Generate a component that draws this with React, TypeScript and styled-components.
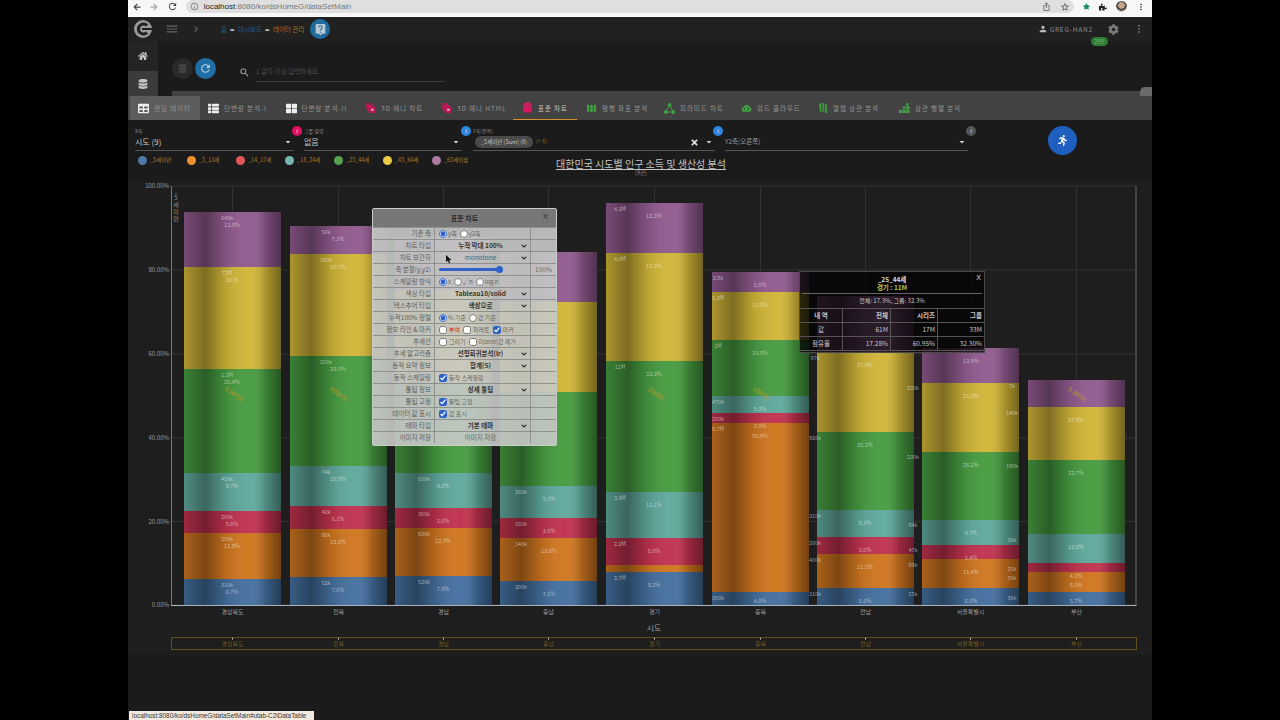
import React from 'react';
import styled, { createGlobalStyle } from 'styled-components';
import {
  FaArrowLeft, FaArrowRight, FaChevronDown, FaCloud, FaCog, FaDatabase, FaGhost, FaHome, FaPuzzlePiece,
  FaRunning, FaStar, FaTable, FaThLarge, FaThList, FaTimes,
} from 'react-icons/fa';
import { MdChevronRight, MdInfoOutline, MdIosShare, MdLiveHelp, MdMenu, MdMoreVert, MdPerson, MdRefresh, MdStarBorder, MdViewWeek, MdArrowDropDown, MdSearch } from 'react-icons/md';

const FONT = `"Noto Sans CJK KR", "Noto Sans", sans-serif`;

const GlobalStyle = createGlobalStyle`
  html, body { margin: 0; padding: 0; background: #000; height: 720px; overflow: hidden; }
  body { font-family: ${FONT}; }
`;

const Page = styled.div`
  position: relative;
  width: 1024px;
  height: 720px;
  margin: 0 auto;
  background: #1b1b1b;
  overflow: hidden;
`;

/* browser chrome */
const BrowserBar = styled.div`
  height: 17px;
  box-sizing: border-box;
  padding: 0 6px 3px 5px;
  background: #f7f7f7;
  border-bottom: 1px solid #fff;
  display: flex;
  align-items: center;
  color: #444;
`;
const NavIcons = styled.div`
  display: flex;
  align-items: center;
  gap: 9px;
  width: 53px;
  font-size: 8px;
`;
const UrlPill = styled.div`
  width: 894px;
  height: 13px;
  border-radius: 7px;
  background: #dfdfdf;
  display: flex;
  align-items: center;
  padding: 0 4px;
  box-sizing: border-box;
  gap: 5px;
  font: 8px "Liberation Sans", sans-serif;
  color: #777;
  b { font-weight: 400; color: #222; }
`;
const UrlEnd = styled.span`
  margin-left: auto;
  display: flex;
  gap: 9px;
  align-items: center;
  font-size: 9px;
  color: #555;
`;
const ExtIcons = styled.div`
  margin-left: 9px;
  display: flex;
  align-items: center;
  gap: 9px;
  font-size: 8px;
  color: #222;
`;
const Avatar = styled.span`
  width: 11px;
  height: 11px;
  border-radius: 50%;
  background: radial-gradient(circle at 50% 40%, #c9a78e 0 35%, #55524c 40% 60%, #cfcfcf 65%);
`;

/* app header */
const AppHeader = styled.header`
  height: 24px;
  background: #212121;
  display: flex;
  align-items: center;
  padding-left: 5px;
  color: #8a8a8a;
`;
const Logo = styled.svg`
  width: 20px;
  height: 20px;
  flex: none;
`;
const HeaderBtn = styled.span`
  display: flex;
  margin-left: ${p => p.$ml}px;
  font-size: ${p => p.$size || 14}px;
  color: ${p => p.$color || '#666'};
`;
const Crumbs = styled.nav`
  margin-left: 19px;
  display: flex;
  align-items: center;
  gap: 3px;
  font-size: 6.5px;
  color: #1f5f85;
`;
const CrumbArrow = styled.span`
  color: #bbb;
  font-size: 6px;
`;
const CrumbLast = styled.span`
  color: #a96f17;
`;
const HelpBtn = styled.span`
  width: 20px;
  height: 20px;
  border-radius: 50%;
  margin-left: 6px;
  background: #1f6a9e;
  color: #b9c7d1;
  display: flex;
  align-items: center;
  justify-content: center;
  font-size: 13px;
`;
const UserArea = styled.div`
  margin-left: auto;
  display: flex;
  align-items: center;
  position: relative;
  padding-right: 7px;
`;
const UserName = styled.span`
  font: 6.5px ${FONT};
  letter-spacing: 0.8px;
  color: #8f8f8f;
  margin: 0 15px 0 2px;
`;
const CountBadge = styled.span`
  position: absolute;
  left: 53px;
  top: 14px;
  width: 17px;
  height: 9px;
  border-radius: 5px;
  background: #2e7d32;
  color: #79b27c;
  font: 6px/9px ${FONT};
  text-align: center;
`;

/* sidebar + search */
const Workspace = styled.div`
  height: 55px;
  display: flex;
`;
const SideRail = styled.aside`
  width: 30px;
  background: #242424;
  display: flex;
  flex-direction: column;
`;
const RailItem = styled.div`
  height: ${p => (p.$active ? 25 : 30)}px;
  display: flex;
  align-items: center;
  justify-content: center;
  background: ${p => (p.$active ? '#3b3b3b' : 'transparent')};
  color: #c4c4c4;
  font-size: 10px;
`;
const SearchArea = styled.div`
  flex: 1;
  display: flex;
  flex-direction: column;
  min-width: 0;
`;
const SearchRow = styled.div`
  flex: 1;
  display: flex;
  align-items: center;
  padding: 5px 0 0 14px;
`;
const RoundBtn = styled.span`
  width: 21px;
  height: 21px;
  border-radius: 50%;
  margin-right: 2px;
  background: ${p => (p.$blue ? '#1f6ea5' : '#2a2a2a')};
  color: ${p => (p.$blue ? '#b9d2e4' : '#444')};
  display: flex;
  align-items: center;
  justify-content: center;
  font-size: ${p => (p.$blue ? 13 : 9)}px;
`;
const SearchIcon = styled.span`
  display: flex;
  margin: 7px 6px 0 21px;
  color: #b5b5b5;
  font-size: 11px;
`;
const SearchField = styled.div`
  width: 189px;
  height: 16px;
  margin-top: 9px;
  border-bottom: 1px solid #3d3d3d;
  color: #4d4d4d;
  font-size: 6.5px;
  line-height: 13px;
`;
const TabLip = styled.div`
  height: 5px;
  margin-left: 14px;
  background: #424242;
  position: relative;
`;
const ScrollKnob = styled.span`
  position: absolute;
  right: 0;
  bottom: 0;
  width: 12px;
  height: 9px;
  border-radius: 5px 0 0 0;
  background: #6a6a6a;
`;

/* tabs */
const TabBar = styled.div`
  height: 24px;
  background: #424242;
  display: flex;
  padding-left: 2px;
`;
const Tab = styled.div`
  width: ${p => p.$w}px;
  flex: none;
  box-sizing: border-box;
  padding-left: ${p => p.$pl}px;
  display: flex;
  align-items: center;
  gap: 5px;
  font-size: 6.5px;
  letter-spacing: 0.9px;
  white-space: nowrap;
  color: ${p => (p.$current ? '#c8c8c8' : '#959595')};
  background: ${p => (p.$active ? '#5c5c5c' : 'transparent')};
  border-bottom: ${p => (p.$current ? '1px solid #d8912c' : '0')};
`;
const TabIcon = styled.span`
  display: flex;
  width: 11px;
  justify-content: center;
  font-size: ${p => p.$size || 10}px;
  color: ${p => p.$color};
`;

/* selectors */
const SelectorRow = styled.div`
  height: 35px;
  position: relative;
  display: flex;
  padding: 5px 0 0 7px;
  box-sizing: border-box;
`;
const Field = styled.div`
  position: relative;
  width: ${p => p.$w}px;
  margin-right: ${p => p.$mr}px;
  height: 26px;
  box-sizing: border-box;
  border-bottom: 1px solid #555;
  color: #c5c5c5;
`;
const FieldLabel = styled.div`
  font-size: 5px;
  line-height: 7px;
  height: 7px;
  color: #8d8d8d;
  margin-top: 2px;
`;
const FieldValue = styled.div`
  font-size: 8px;
  line-height: 13px;
  margin-top: 1px;
  display: flex;
  align-items: center;
  gap: 3px;
`;
const FieldHint = styled.span`
  font-size: 6.5px;
  color: #9a9a9a;
`;
const Caret = styled.span`
  position: absolute;
  right: 0;
  bottom: 2px;
  font-size: 12px;
  display: flex;
  color: #d0d0d0;
`;
const ClearX = styled.span`
  position: absolute;
  right: 16px;
  bottom: 3px;
  font-size: 9px;
  display: flex;
  color: #e0e0e0;
`;
const InfoDot = styled.span`
  position: absolute;
  left: ${p => p.$x}px;
  top: ${p => p.$y}px;
  width: 10px;
  height: 10px;
  border-radius: 50%;
  background: ${p => p.$color};
  color: #eee;
  font: italic 6px/10px "Liberation Serif", serif;
  text-align: center;
`;
const Chip = styled.span`
  background: #4a4a4a;
  color: #c4c4c4;
  border-radius: 6px;
  margin-left: 2px;
  padding: 0 6px;
  height: 12px;
  line-height: 12px;
  font-size: 5.5px;
`;
const ChipMore = styled.span`
  color: #a06d1f;
  font-size: 5.5px;
`;
const RunFab = styled.span`
  position: absolute;
  left: 920px;
  top: 6px;
  width: 29px;
  height: 29px;
  border-radius: 50%;
  background: #1f5fbf;
  color: #fff;
  display: flex;
  align-items: center;
  justify-content: center;
  font-size: 11px;
`;

/* legend + title */
const TitleRow = styled.div`
  height: 25px;
  display: grid;
  grid-template-columns: 1fr auto 1fr;
  align-items: start;
`;
const Legend = styled.div`
  display: flex;
  padding: 0 0 0 10px;
`;
const LegendItem = styled.div`
  width: 49px;
  flex: none;
  display: flex;
  align-items: center;
  gap: 3px;
  font-size: 5.5px;
  line-height: 10px;
  color: #ac7c25;
  white-space: nowrap;
`;
const LegendDot = styled.span`
  width: 9px;
  height: 9px;
  flex: none;
  border-radius: 50%;
  background: ${p => p.$color};
`;
const TitleBlock = styled.div`
  text-align: center;
  margin: 2px 0 0 2px;
`;
const ChartTitle = styled.div`
  font-size: 10px;
  line-height: 13px;
  color: #c4c4c4;
  text-decoration: underline;
`;
const ChartSub = styled.div`
  font-size: 5.5px;
  line-height: 7px;
  color: #8a8a8a;
`;

/* chart */
const ChartBox = styled.div`
  height: 475px;
  background: #1e1e1e;
  svg { display: block; }
`;
const TickText = styled.text`
  font-family: ${FONT};
  font-size: 6px;
  fill: #9c9c9c;
`;
const AxisName = styled.text`
  font-family: ${FONT};
  font-size: 8px;
  fill: #9c9c9c;
  text-anchor: middle;
`;
const BarText = styled.text`
  font-family: ${FONT};
  font-size: 5.5px;
  fill: rgba(255, 255, 255, 0.5);
  text-anchor: middle;
`;
const SkewText = styled.text`
  font-family: ${FONT};
  font-size: 6px;
  fill: #b99a2c;
  text-anchor: middle;
`;
const AxisTitle = styled.text`
  font-family: ${FONT};
  font-size: 6px;
  fill: #8f8f8f;
  writing-mode: vertical-rl;
  text-orientation: upright;
  letter-spacing: 1px;
`;
const BrushText = styled.text`
  font-family: ${FONT};
  font-size: 6px;
  fill: #70591d;
  text-anchor: middle;
`;

/* floating settings panel */
const SettingsPanel = styled.div`
  position: absolute;
  left: 244px;
  top: 208px;
  width: 185px;
  height: 238px;
  box-sizing: border-box;
  border: 1.5px solid #c9cdc9;
  border-radius: 2px;
  background: rgba(200, 202, 200, 0.9);
  color: #565656;
`;
const PanelHead = styled.div`
  height: 18px;
  background: #777;
  color: #2b2b2b;
  font-size: 7px;
  font-weight: 700;
  display: flex;
  align-items: center;
  justify-content: center;
  position: relative;
`;
const PanelClose = styled.span`
  position: absolute;
  right: 8px;
  top: 3px;
  font: 8px "Liberation Sans", sans-serif;
`;
const PanelRow = styled.div`
  height: 12px;
  box-sizing: border-box;
  border-top: 1px solid #8f918f;
  display: grid;
  grid-template-columns: 61px 97px 1fr;
  font-size: 6.5px;
  line-height: 11px;
`;
const RowLabel = styled.div`
  text-align: right;
  padding-right: 3px;
  color: #5d5d5d;
  white-space: nowrap;
`;
const RowValue = styled.div`
  border-left: 1px solid #8f918f;
  border-right: 1px solid #8f918f;
  display: flex;
  align-items: center;
  padding-left: 4px;
  gap: 1px;
  position: relative;
  white-space: nowrap;
`;
const RowExtra = styled.div`
  text-align: center;
  color: #6d6d6d;
`;
const SelectText = styled.span`
  flex: 1;
  text-align: center;
  font-weight: ${p => (p.$soft ? 400 : 700)};
  color: ${p => (p.$soft ? '#4a6478' : '#333')};
  padding-right: 8px;
`;
const SelectArrow = styled.span`
  position: absolute;
  right: 3px;
  top: 3px;
  display: flex;
  font-size: 6px;
  color: #1d1d1d;
`;
const Plain = styled.span`
  flex: 1;
  text-align: center;
  padding-right: 8px;
  color: #666;
`;
const Tiny = styled.span`
  margin-right: 2px;
  color: ${p => p.$color || '#666'};
  font-size: 6px;
`;
const Radio = styled.input.attrs({ type: 'radio', readOnly: true })`
  width: 8px;
  height: 8px;
  margin: 0;
  accent-color: #2f62c9;
`;
const Check = styled.input.attrs({ type: 'checkbox', readOnly: true })`
  width: 8px;
  height: 8px;
  margin: 0 1px 0 0;
  accent-color: #2f62c9;
`;
const SliderTrack = styled.span`
  display: block;
  width: 61px;
  height: 3px;
  border-radius: 2px;
  background: #2f62c9;
  position: relative;
`;
const SliderThumb = styled.span`
  position: absolute;
  right: -3px;
  top: -2px;
  width: 7px;
  height: 7px;
  border-radius: 50%;
  background: #2f62c9;
`;
const Pointer = styled.svg`
  position: absolute;
  left: 73px;
  top: 46px;
  width: 6px;
  height: 9px;
`;

/* floating data tooltip */
const DataTip = styled.div`
  position: absolute;
  left: 671px;
  top: 271px;
  width: 186px;
  height: 82px;
  box-sizing: border-box;
  border: 1px solid #4a4a4a;
  background: rgba(0, 0, 0, 0.72);
  color: #c9c9c9;
  font-size: 6.5px;
`;
const TipClose = styled.span`
  position: absolute;
  right: 3px;
  top: 2px;
  font: 7px "Liberation Sans", sans-serif;
  color: #ddd;
`;
const TipHead = styled.div`
  height: 22px;
  text-align: center;
  line-height: 8px;
  padding-top: 3px;
  box-sizing: border-box;
  border-bottom: 1px solid #666;
  margin: 0 2px;
  font-weight: 700;
  color: #ddd;
`;
const TipSeries = styled.div`
  color: #b7c63c;
`;
const TipSummary = styled.div`
  height: 14px;
  line-height: 14px;
  text-align: center;
  font-size: 6px;
`;
const TipGrid = styled.div`
  display: grid;
  grid-template-columns: 43px 48px 47px 1fr;
  border-top: 1px solid #555;
`;
const TipCell = styled.div`
  height: 14px;
  line-height: 13px;
  box-sizing: border-box;
  border-right: 1px solid #555;
  border-bottom: 1px solid #555;
  padding: 0 2px;
  text-align: ${p => (p.$center ? 'center' : 'right')};
  font-weight: ${p => (p.$head ? 700 : 400)};
  white-space: nowrap;
  &:nth-child(4n) { border-right: 0; }
`;

const StatusTip = styled.div`
  position: absolute;
  left: 1px;
  bottom: 0;
  width: 185px;
  height: 9px;
  background: #f2eadf;
  color: #333;
  font: 6.4px/9px "Liberation Sans", sans-serif;
  padding-left: 3px;
  box-sizing: border-box;
  white-space: nowrap;
`;

const COLORS = ['#925b8f', '#d2b638', '#479c41', '#60a99d', '#c1324f', '#d0761f', '#44709f'];
const LEGEND = [
  ['_5세미만', '#4e79a7'], ['_5_13세', '#f28e2c'], ['_14_17세', '#e15759'], ['_18_24세', '#76b7b2'],
  ['_25_44세', '#59a14f'], ['_45_64세', '#edc949'], ['_65세이상', '#af7aa1'],
];

// tops: purple, yellow, green, teal, red, orange, blue
const BARS = [
  { name: '경상북도', x: 184, vx: 227, px: 232, tops: [212, 267, 369, 473, 511, 533, 579],
    val: ['640k', '72M', '1.2M', '450k', '260k', '550k', '310k'], pct: ['13.8%', '26.%', '26.4%', '9.7%', '5.6%', '11.8%', '6.7%'] },
  { name: '전북', x: 290, vx: 326, px: 338, tops: [226, 254, 356, 466, 506, 529, 577],
    val: ['50k', '180k', '200k', '74k', '42k', '86k', '52k'], pct: ['7.3%', '26.7%', '29.0%', '10.8%', '6.1%', '12.5%', '7.6%'] },
  { name: '경남', x: 395, vx: 424, px: 443, tops: [237, 290, 382, 473, 508, 528, 576],
    val: ['', '', '', '600k', '360k', '830k', '520k'], pct: ['', '', '', '9.3%', '5.6%', '12.7%', '7.9%'] },
  { name: '충남', x: 500, vx: 521, px: 549, tops: [252, 302, 392, 486, 518, 538, 581],
    val: ['', '', '', '260k', '160k', '340k', '200k'], pct: ['', '', '', '9.3%', '3.5%', '12.0%', '7.1%'] },
  { name: '경기', x: 606, vx: 620, px: 654, tops: [203, 253, 361, 492, 538, 565, 572],
    val: ['4.3M', '4.3M', '11M', '3.9M', '2.2M', '', '2.7M'], pct: ['12.3%', '16.3%', '32.3%', '11.1%', '6.6%', '', '8.2%'] },
  { name: '충북', x: 712, vx: 718, px: 760, tops: [272, 292, 340, 396, 413, 423, 592],
    val: ['3.8k', '1.3M', '1M', '470k', '200k', '6.7M', '300k'], pct: ['5.6%', '10.2%', '10.5%', '9.3%', '3.0%', '50.8%', '4.0%'] },
  { name: '전남', x: 817, vx: 815, px: 865, tops: [296, 352, 432, 510, 537, 554, 588],
    val: ['', '97k', '920k', '310k', '200k', '400k', '310k'], pct: ['', '27.9%', '26.2%', '8.3%', '5.6%', '11.5%', '6.0%'] },
  { name: '서울특별시', x: 922, vx: 1012, px: 971, tops: [348, 383, 452, 520, 545, 559, 588],
    val: ['', '', '', '', '', '', ''], pct: ['13.9%', '21.3%', '26.2%', '9.7%', '5.4%', '11.4%', '6.8%'] },
  { name: '부산', x: 1028, vx: 1076, px: 1076, tops: [380, 407, 460, 534, 563, 572, 592],
    val: ['', '', '', '', '', '', ''], pct: ['', '27.9%', '22.7%', '12.8%', '4.2%', '8.5%', '5.7%'] },
];

const SIDE_LABELS: [number, number, string][] = [
  [913, 390, '230k'], [913, 459, '230k'], [913, 527, '84k'], [913, 552, '47k'], [913, 567, '99k'], [913, 596, '55k'],
  [1012, 388, '7k'], [1012, 415, '140k'], [1012, 468, '190k'], [1012, 542, '36k'], [1012, 571, '25k'], [1012, 580, '50k'], [1012, 600, '36k'],
];
const SKEW_LABELS: [number, number, string][] = [
  [233, 396, '6.9M(9)'], [338, 396, '690k(9)'], [655, 396, '33M(9)'], [760, 395, '13M(9)'], [1076, 396, '3.3M(9)'],
];
const TICKS = [[186, '100.00%'], [270, '80.00%'], [354, '60.00%'], [438, '40.00%'], [521.5, '20.00%'], [605, '0.00%']] as const;

const TABS = [
  { label: '랜딩 데이터', w: 70, pl: 8, icon: <FaTable />, color: '#eee', size: 11, active: true },
  { label: '단변량 분석-I', w: 77, pl: 8, icon: <FaThList />, color: '#eee', size: 11 },
  { label: '단변량 분석-II', w: 79, pl: 8.5, icon: <FaThLarge />, color: '#eee', size: 11 },
  { label: '3D 애니 차트', w: 76, pl: 9, icon: <Overlap />, color: '#c2185b' },
  { label: '3D 애니 HTML', w: 81, pl: 9, icon: <Overlap />, color: '#c2185b' },
  { label: '표준 차트', w: 64, pl: 9, icon: <FaGhost />, color: '#d81b60', size: 11, current: true },
  { label: '평행 좌표 분석', w: 78, pl: 9, icon: <MdViewWeek />, color: '#3fa142', size: 13 },
  { label: '피라미드 차트', w: 77, pl: 9, icon: <Pyramid />, color: '#3fa142' },
  { label: '워드 클라우드', w: 76, pl: 9, icon: <CodeCloud />, color: '#3fa142' },
  { label: '열맵 상관 분석', w: 82, pl: 9, icon: <Bands />, color: '#3fa142' },
  { label: '상관 행렬 분석', w: 90, pl: 9, icon: <Blocks />, color: '#3fa142' },
];

function Overlap() {
  return (
    <svg width="12" height="12" viewBox="0 0 12 12" fill="currentColor">
      <rect x="0.5" y="0.5" width="7" height="7" rx="1.5" opacity="0.7" />
      <rect x="2.5" y="2.5" width="7" height="7" rx="1.5" opacity="0.85" />
      <rect x="4.5" y="4.5" width="7" height="7" rx="1.5" />
      <path d="M7 6.5 L10 8 L7 9.5 Z" fill="#ddd" />
    </svg>
  );
}
function Pyramid() {
  return (
    <svg width="11" height="11" viewBox="0 0 11 11" fill="none" stroke="currentColor" strokeWidth="1">
      <circle cx="5.5" cy="2" r="1.5" fill="currentColor" />
      <circle cx="1.8" cy="9" r="1.5" fill="currentColor" />
      <circle cx="9.2" cy="9" r="1.5" fill="currentColor" />
      <path d="M5.5 2 L1.8 9 H9.2 Z" />
    </svg>
  );
}
function CodeCloud() {
  return (
    <svg width="13" height="10" viewBox="0 0 13 10">
      <path d="M3 9.5 A2.6 2.6 0 0 1 2.6 4.4 A4 4 0 0 1 10 3.6 A3 3 0 0 1 10 9.5 Z" fill="currentColor" />
      <path d="M5 4.5 L3.6 6 L5 7.5 M8 4.5 L9.4 6 L8 7.5" fill="none" stroke="#333" strokeWidth="1" />
    </svg>
  );
}
function Bands() {
  return (
    <svg width="10" height="12" viewBox="0 0 10 12" fill="currentColor">
      <path d="M1 2 L3 1 L3.5 9 L2 10 Z" />
      <path d="M4 1 L6 1 L6.5 10 L4.5 10 Z" opacity="0.8" />
      <path d="M7 1.5 L8.5 2 L9.5 11 L7.5 11 Z" />
    </svg>
  );
}
function Blocks() {
  return (
    <svg width="12" height="12" viewBox="0 0 12 12" fill="currentColor">
      <rect x="0" y="8" width="3.5" height="3.5" />
      <rect x="4" y="8" width="3.5" height="3.5" />
      <rect x="8" y="8" width="3.5" height="3.5" />
      <rect x="4" y="4" width="3.5" height="3.5" opacity="0.75" />
      <rect x="8" y="4" width="3.5" height="3.5" />
      <circle cx="9" cy="2" r="1.5" />
    </svg>
  );
}

function StackedChart() {
  return (
    <svg width="1024" height="475" viewBox="128 180 1024 475">
      <defs>
        <linearGradient id="cyl" x1="0" x2="1" y1="0" y2="0">
          <stop offset="0" stopColor="#000" stopOpacity="0.18" />
          <stop offset="0.22" stopColor="#000" stopOpacity="0.4" />
          <stop offset="0.42" stopColor="#000" stopOpacity="0.12" />
          <stop offset="0.68" stopColor="#fff" stopOpacity="0.03" />
          <stop offset="0.84" stopColor="#000" stopOpacity="0.18" />
          <stop offset="1" stopColor="#000" stopOpacity="0.45" />
        </linearGradient>
      </defs>
      {TICKS.map(([y]) => (
        <line key={y} x1="166" x2="1136" y1={y} y2={y} stroke="#323232" strokeWidth="1" />
      ))}
      {BARS.map(b => (
        <line key={b.name} x1={b.x + 48.5} x2={b.x + 48.5} y1="186" y2="605" stroke="#323232" />
      ))}
      <line x1="171.5" x2="171.5" y1="186" y2="605" stroke="#777" />
      <line x1="1136" x2="1136" y1="186" y2="605" stroke="#666" />
      {TICKS.map(([y, t]) => (
        <TickText key={t} x="169" y={y + 2} textAnchor="end">{t}</TickText>
      ))}
      <AxisTitle x="176" y="188">_5세미만</AxisTitle>

      {BARS.map(b => (
        <g key={b.name}>
          {b.tops.map((top, i) => (
            <rect key={i} x={b.x} y={top} width="97" height={(b.tops[i + 1] ?? 605) - top} fill={COLORS[i]} />
          ))}
          <rect x={b.x} y={b.tops[0]} width="97" height={605 - b.tops[0]} fill="url(#cyl)" />
          {b.tops.map((top, i) => (
            <React.Fragment key={i}>
              {b.val[i] && <BarText x={b.vx} y={top + 8}>{b.val[i]}</BarText>}
              {b.pct[i] && <BarText x={b.px} y={Math.min(top + 15, 603)}>{b.pct[i]}</BarText>}
            </React.Fragment>
          ))}
          <TickText x={b.x + 48.5} y="614" textAnchor="middle">{b.name}</TickText>
          <line x1={b.x + 48.5} x2={b.x + 48.5} y1="637" y2="639.5" stroke="#ddd" />
          <BrushText x={b.x + 48.5} y="646">{b.name}</BrushText>
        </g>
      ))}
      {SIDE_LABELS.map(([x, y, t]) => (
        <BarText key={`${x}-${y}`} x={x} y={y}>{t}</BarText>
      ))}
      {SKEW_LABELS.map(([x, y, t]) => (
        <SkewText key={x} x={x} y={y} transform={`rotate(35 ${x} ${y})`}>{t}</SkewText>
      ))}
      <line x1="171" x2="1136.5" y1="605.5" y2="605.5" stroke="#a9b3bd" />
      <AxisName x="654" y="631">시도</AxisName>
      <rect x="171.5" y="637.5" width="965" height="12" fill="none" stroke="#5f5220" />
    </svg>
  );
}

const App: React.FC = () => {
  return (
    <Page>
      <GlobalStyle />
      <BrowserBar>
        <NavIcons>
          <FaArrowLeft />
          <FaArrowRight color="#a5a5a5" />
          <MdRefresh size={11} />
        </NavIcons>
        <UrlPill>
          <MdInfoOutline size={9} />
          <span><b>localhost</b>:8080/ko/dsHomeG/dataSetMain</span>
          <UrlEnd>
            <MdIosShare />
            <MdStarBorder size={10} />
          </UrlEnd>
        </UrlPill>
        <ExtIcons>
          <FaStar color="#1b8a6b" size={7} />
          <FaPuzzlePiece />
          <Avatar />
          <MdMoreVert size={10} />
        </ExtIcons>
      </BrowserBar>

      <AppHeader>
        <Logo viewBox="0 0 20 20">
          <circle cx="10" cy="10" r="9" fill="#9a9a9a" />
          <path d="M14 6.5 A5 5 0 1 0 14 13.5" fill="none" stroke="#212121" strokeWidth="3" />
          <rect x="9" y="9" width="10" height="2" fill="#212121" />
        </Logo>
        <HeaderBtn $ml={12}><MdMenu /></HeaderBtn>
        <HeaderBtn $ml={11} $size={12}><MdChevronRight /></HeaderBtn>
        <Crumbs>
          <span>홈</span>
          <CrumbArrow>➨</CrumbArrow>
          <span>대시보드</span>
          <CrumbArrow>➨</CrumbArrow>
          <CrumbLast>데이터 관리</CrumbLast>
        </Crumbs>
        <HelpBtn><MdLiveHelp /></HelpBtn>
        <UserArea>
          <MdPerson size={10} color="#bbb" />
          <UserName>GREG-HAN2</UserName>
          <CountBadge>299</CountBadge>
          <FaCog size={11} color="#7b7b7b" />
          <HeaderBtn $ml={14} $size={12}><MdMoreVert /></HeaderBtn>
        </UserArea>
      </AppHeader>

      <Workspace>
        <SideRail>
          <RailItem><FaHome /></RailItem>
          <RailItem $active><FaDatabase /></RailItem>
        </SideRail>
        <SearchArea>
          <SearchRow>
            <RoundBtn><FaDatabase /></RoundBtn>
            <RoundBtn $blue><MdRefresh /></RoundBtn>
            <SearchIcon><MdSearch /></SearchIcon>
            <SearchField>1 글자 이상 입력하세요.</SearchField>
          </SearchRow>
          <TabLip><ScrollKnob /></TabLip>
        </SearchArea>
      </Workspace>

      <TabBar>
        {TABS.map(t => (
          <Tab key={t.label} $w={t.w} $pl={t.pl} $active={t.active} $current={t.current}>
            <TabIcon $color={t.color} $size={t.size}>{t.icon}</TabIcon>
            {t.label}
          </Tab>
        ))}
      </TabBar>

      <SelectorRow>
        <Field $w={159} $mr={10}>
          <FieldLabel>X축</FieldLabel>
          <FieldValue>시도 (9)</FieldValue>
          <Caret><MdArrowDropDown /></Caret>
        </Field>
        <InfoDot $x={164} $y={6} $color="#e0115f">i</InfoDot>
        <Field $w={158} $mr={11}>
          <FieldLabel>그룹 컬럼</FieldLabel>
          <FieldValue>없음</FieldValue>
          <Caret><MdArrowDropDown /></Caret>
        </Field>
        <InfoDot $x={333} $y={6} $color="#2e86de">i</InfoDot>
        <Field $w={242} $mr={10}>
          <FieldLabel>Y축(왼쪽)</FieldLabel>
          <FieldValue>
            <Chip>_5세미만 [Sum] (9)</Chip>
            <ChipMore>(+ 6)</ChipMore>
          </FieldValue>
          <ClearX><FaTimes /></ClearX>
          <Caret><MdArrowDropDown /></Caret>
        </Field>
        <InfoDot $x={585} $y={6} $color="#2e86de">i</InfoDot>
        <Field $w={243} $mr={0}>
          <FieldLabel />
          <FieldValue><FieldHint>Y2축(오른쪽)</FieldHint></FieldValue>
          <Caret><MdArrowDropDown /></Caret>
        </Field>
        <InfoDot $x={838} $y={6} $color="#555">i</InfoDot>
        <RunFab><FaRunning /></RunFab>
      </SelectorRow>

      <TitleRow>
        <Legend>
          {LEGEND.map(([name, color]) => (
            <LegendItem key={name}>
              <LegendDot $color={color} />
              {name}
            </LegendItem>
          ))}
        </Legend>
        <TitleBlock>
          <ChartTitle>대한민국 시도별 인구 소득 및 생산성 분석</ChartTitle>
          <ChartSub>(9건)</ChartSub>
        </TitleBlock>
      </TitleRow>

      <ChartBox>
        <StackedChart />
      </ChartBox>

      <SettingsPanel>
        <PanelHead>
          표준 차트
          <PanelClose>X</PanelClose>
        </PanelHead>
        <PanelRow>
          <RowLabel>기준 축</RowLabel>
          <RowValue><Radio defaultChecked name="axis" /><Tiny>y축</Tiny><Radio name="axis" /><Tiny>y2축</Tiny></RowValue>
          <RowExtra />
        </PanelRow>
        <SelectRow label="차트 타입" value="누적 막대 100%" />
        <SelectRow label="차트 보간자" value="monotone" soft />
        <PanelRow>
          <RowLabel>축 분할(y,y2)</RowLabel>
          <RowValue><SliderTrack><SliderThumb /></SliderTrack></RowValue>
          <RowExtra>100%</RowExtra>
        </PanelRow>
        <PanelRow>
          <RowLabel>스케일링 방식</RowLabel>
          <RowValue>
            <Radio defaultChecked name="scale" /><Tiny>x</Tiny>
            <Radio name="scale" /><Tiny>√n</Tiny>
            <Radio name="scale" /><Tiny>log n</Tiny>
          </RowValue>
          <RowExtra />
        </PanelRow>
        <SelectRow label="색상 타입" value="Tableau10/solid" />
        <SelectRow label="텍스추어 타입" value="색상으로" />
        <PanelRow>
          <RowLabel>누적100% 정렬</RowLabel>
          <RowValue><Radio defaultChecked name="sort" /><Tiny>% 기준</Tiny><Radio name="sort" /><Tiny>값 기준</Tiny></RowValue>
          <RowExtra />
        </PanelRow>
        <PanelRow>
          <RowLabel>정보 라인 &amp; 마커</RowLabel>
          <RowValue>
            <Check /><Tiny $color="#d32020">부여</Tiny>
            <Check /><Tiny>파레토</Tiny>
            <Check defaultChecked /><Tiny>마커</Tiny>
          </RowValue>
          <RowExtra />
        </PanelRow>
        <PanelRow>
          <RowLabel>추세선</RowLabel>
          <RowValue><Check /><Tiny>그리기</Tiny><Check /><Tiny>0(zero)값 제거</Tiny></RowValue>
          <RowExtra />
        </PanelRow>
        <SelectRow label="추세 알고리즘" value="선형회귀분석(lr)" />
        <SelectRow label="동작 요약 정보" value="합계(S)" />
        <PanelRow>
          <RowLabel>동작 스케일링</RowLabel>
          <RowValue><Check defaultChecked /><Tiny>동작 스케일링</Tiny></RowValue>
          <RowExtra />
        </PanelRow>
        <SelectRow label="툴팁 정보" value="상세 툴팁" />
        <PanelRow>
          <RowLabel>툴팁 고정</RowLabel>
          <RowValue><Check defaultChecked /><Tiny>툴팁 고정</Tiny></RowValue>
          <RowExtra />
        </PanelRow>
        <PanelRow>
          <RowLabel>데이터 값 표시</RowLabel>
          <RowValue><Check defaultChecked /><Tiny>값 표시</Tiny></RowValue>
          <RowExtra />
        </PanelRow>
        <SelectRow label="테마 타입" value="기본 테마" />
        <PanelRow>
          <RowLabel>이미지 저장</RowLabel>
          <RowValue><Plain>이미지 저장</Plain></RowValue>
          <RowExtra />
        </PanelRow>
        <Pointer viewBox="0 0 6 9"><path d="M0 0 L0 7 L1.8 5.6 L3 8.6 L4.2 8 L3 5.2 L5.4 5 Z" fill="#111" /></Pointer>
      </SettingsPanel>

      <DataTip>
        <TipClose>X</TipClose>
        <TipHead>
          _25_44세
          <TipSeries>경기 : 11M</TipSeries>
        </TipHead>
        <TipSummary>전체: 17.3%, 그룹: 32.3%</TipSummary>
        <TipGrid>
          <TipCell $head $center>내 역</TipCell>
          <TipCell $head>전체</TipCell>
          <TipCell $head>시리즈</TipCell>
          <TipCell $head>그룹</TipCell>
          <TipCell $center>값</TipCell>
          <TipCell>61M</TipCell>
          <TipCell>17M</TipCell>
          <TipCell>33M</TipCell>
          <TipCell $center>점유율</TipCell>
          <TipCell>17.28%</TipCell>
          <TipCell>60.95%</TipCell>
          <TipCell>32.30%</TipCell>
        </TipGrid>
      </DataTip>

      <StatusTip>localhost:8080/ko/dsHomeG/dataSetMain#utab-C2iDataTable</StatusTip>
    </Page>
  );
};

function SelectRow({ label, value, soft }: { label: string; value: string; soft?: boolean }) {
  return (
    <PanelRow>
      <RowLabel>{label}</RowLabel>
      <RowValue>
        <SelectText $soft={soft}>{value}</SelectText>
        <SelectArrow><FaChevronDown /></SelectArrow>
      </RowValue>
      <RowExtra />
    </PanelRow>
  );
}

export default App;
